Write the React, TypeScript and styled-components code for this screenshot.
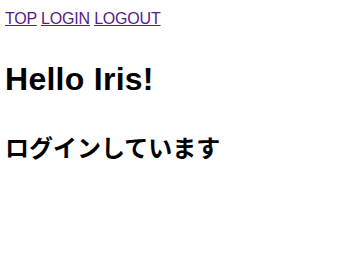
import React from 'react';
import styled, { createGlobalStyle } from 'styled-components';

const GlobalStyle = createGlobalStyle`
  body {
    margin: 0;
    background: #fff;
    color: #000;
    font-family: "Liberation Sans", "Noto Sans CJK JP", sans-serif;
  }
`;

const Page = styled.div`
  padding: 7px 5px;
`;

const Nav = styled.nav`
  font-size: 16px;
  line-height: 23px;
  letter-spacing: -0.19px;
`;

const NavLink = styled.a`
  color: #551a8b;
  text-decoration: underline;
`;

const Title = styled.h1`
  margin: 26px 0 0;
  font-size: 32px;
  line-height: 46px;
  font-weight: bold;
  letter-spacing: 0.27px;
`;

const Status = styled.h2`
  margin: 27px 0 0;
  font-family: "Noto Sans CJK JP", sans-serif;
  font-size: 24px;
  line-height: 35px;
  font-weight: bold;
`;

const links = ['TOP', 'LOGIN', 'LOGOUT'];

export default function App() {
  return (
    <Page>
      <GlobalStyle />
      <Nav>
        {links.map((label, i) => (
          <React.Fragment key={label}>
            {i > 0 && ' '}
            <NavLink href="#">{label}</NavLink>
          </React.Fragment>
        ))}
      </Nav>
      <Title>Hello Iris!</Title>
      <Status>ログインしています</Status>
    </Page>
  );
}
